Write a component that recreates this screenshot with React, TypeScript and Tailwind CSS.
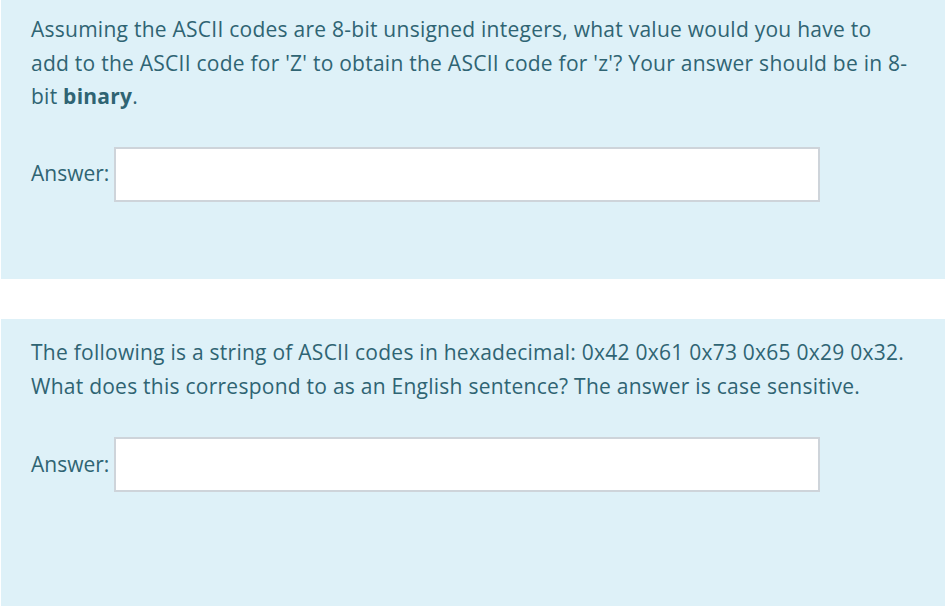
export default function App() {
  const font = { fontFamily: '"Open Sans", "Noto Sans", sans-serif' };
  return (
    <div className="w-[945px] h-[606px] overflow-hidden bg-white" style={font}>
      <div className="ml-[1px] h-[279px] bg-[#def1f8] pl-[30px] pt-[13px] text-[#2f6473]">
        <div className="text-[21px] leading-[33.5px] tracking-[0.25px]">
          Assuming the ASCII codes are 8-bit unsigned integers, what value would you have to
          <br />
          add to the ASCII code for 'Z' to obtain the ASCII code for 'z'? Your answer should be in 8-
          <br />
          bit <b className="font-bold">binary</b>.
        </div>
        <div className="mt-[33px] flex items-center">
          <span className="text-[21px] tracking-[0px]">Answer:</span>
          <div className="ml-auto mr-[125px] w-[706px] h-[55px] bg-white border-2 border-[#ced4da]" />
        </div>
      </div>
      <div className="h-[40px]" />
      <div className="ml-[1px] h-[287px] bg-[#def1f8] pl-[30px] pt-[17px] text-[#2f6473]">
        <div className="text-[21px] leading-[33.5px] tracking-[0.25px]">
          The following is a string of ASCII codes in hexadecimal: 0x42 0x61 0x73 0x65 0x29 0x32.
          <br />
          What does this correspond to as an English sentence? The answer is case sensitive.
        </div>
        <div className="mt-[34px] flex items-center">
          <span className="text-[21px] tracking-[0px]">Answer:</span>
          <div className="ml-auto mr-[125px] w-[706px] h-[55px] bg-white border-2 border-[#ced4da]" />
        </div>
      </div>
    </div>
  );
}
